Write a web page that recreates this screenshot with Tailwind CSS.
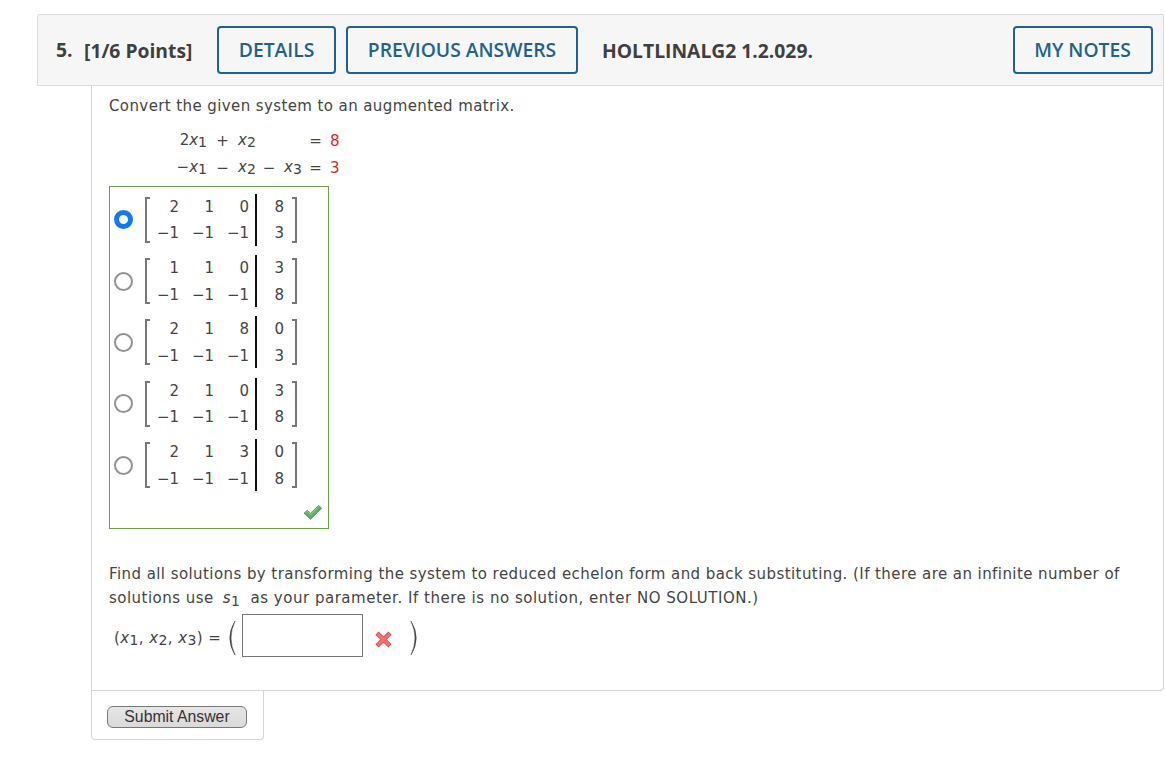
<!DOCTYPE html>
<html lang="en">
<head>
    <meta charset="UTF-8">
    <meta name="viewport" content="width=device-width, initial-scale=1.0">
    <title>HOLTLINALG2 1.2.029</title>
    <script src="https://cdn.jsdelivr.net/npm/@tailwindcss/browser@4"></script>
</head>
<body class="bg-white text-[#444] font-['DejaVu_Sans',sans-serif] text-[15px] h-[766px] overflow-hidden">

    <!-- Question header -->
    <header class="mt-[14px] ml-[37px] w-[1127px] h-[72px] bg-[#f6f6f6] border border-[#dcdcdc] rounded-t-xs flex items-center pl-[18px] pr-[10.5px] font-['Open_Sans',sans-serif] text-[19.3px] font-bold text-[#3f3f3f] whitespace-nowrap">
        <span class="w-[28px]">5.</span>
        <span class="w-[133px] pt-[2px]">[1/6 Points]</span>
        <button class="w-[119px] h-[48px] border-2 border-[#1f628c] rounded-[4px] text-[#1f628c] font-semibold">DETAILS</button>
        <button class="w-[232px] h-[48px] ml-[10px] border-2 border-[#1f628c] rounded-[4px] text-[#1f628c] font-semibold">PREVIOUS ANSWERS</button>
        <span class="ml-[24px] pt-[2px]">HOLTLINALG2 1.2.029.</span>
        <button class="w-[140px] h-[48px] ml-auto border-2 border-[#1f628c] rounded-[4px] text-[#1f628c] font-semibold">MY NOTES</button>
    </header>

    <!-- Question body -->
    <main class="ml-[91px] w-[1073px] h-[605px] border-l border-r border-b border-[#d4d4d4] rounded-br-[4px] pl-[17px] pt-[8px]">
        <p class="h-6 leading-6 tracking-[0.4px]">Convert the given system to an augmented matrix.</p>

        <!-- Linear system -->
        <div class="mt-[9px] ml-[60px] grid grid-cols-[38px_31px_16px_30px_16px_31px_20px] grid-rows-[27px_27px] leading-[27px] whitespace-nowrap">
            <span class="text-right"><span>2</span><i>x</i><span class="relative top-[2px] text-[14px]">1</span></span>
            <span class="text-center pt-px">+</span>
            <span class="text-right pr-px"><i>x</i><span class="relative top-[2px] text-[14px]">2</span></span>
            <span></span>
            <span></span>
            <span class="text-center pt-px">=</span>
            <span class="-ml-px pt-px text-[#d5262b]">8</span>
            <span class="text-right"><span>−</span><i>x</i><span class="relative top-[2px] text-[14px]">1</span></span>
            <span class="text-center pt-px">−</span>
            <span class="text-right pr-px"><i>x</i><span class="relative top-[2px] text-[14px]">2</span></span>
            <span class="text-center pt-px">−</span>
            <span class="text-right pr-px"><i>x</i><span class="relative top-[2px] text-[14px]">3</span></span>
            <span class="text-center pt-px">=</span>
            <span class="-ml-px pt-px text-[#d5262b]">3</span>
        </div>

        <!-- Choices -->
        <div class="mt-[5px] w-[220px] h-[343px] border border-[#6a9f4b] pl-[4px] pt-[2px] relative">
            <div id="choices"></div>
            <svg class="absolute left-[193px] top-[317px] w-[20px] h-[17px]" viewBox="0 0 20 17">
                <path d="M1 9.2 4.2 6.3 7.5 9.4 15.6 1.4 18.7 4.2 7.6 15.3Z" fill="#5bb264" stroke="#58845a" stroke-width=".8" stroke-linejoin="round"/>
                <path d="M2.2 9 4.2 7.3 7.5 10.6 15.6 2.6" fill="none" stroke="#8fd08f" stroke-width="1"/>
            </svg>
        </div>

        <p class="mt-[33px] h-6 leading-6 tracking-[0.428px] whitespace-nowrap">Find all solutions by transforming the system to reduced echelon form and back substituting. (If there are an infinite number of</p>
        <p class="h-6 leading-6 tracking-[0.48px] whitespace-nowrap">solutions use<i class="ml-[9px]">s</i><span class="relative top-[3px] text-[14px]">1</span><span class="ml-[10px] tracking-[0.52px]">as your parameter. If there is no solution, enter NO SOLUTION.)</span></p>

        <!-- Answer entry -->
        <div class="mt-[4px] pl-[5px] flex items-center h-[43px] whitespace-nowrap">
            <span class="w-[114px] pt-[5px] tracking-[0.4px]">(<i>x</i><span class="relative top-[2px] text-[14px]">1</span>, <i>x</i><span class="relative top-[2px] text-[14px]">2</span>, <i>x</i><span class="relative top-[2px] text-[14px]">3</span>) =</span>
            <svg class="w-[8px] h-[36px] mt-[4px]" viewBox="0 0 8 36"><path d="M7 1Q-3.4 18 7 35Q-1 18 7 1Z" fill="#444" stroke="#444" stroke-width=".6"/></svg>
            <input type="text" class="ml-[6px] w-[121px] h-[43px] border border-[#767676]">
            <svg class="ml-[12px] mt-[8px] w-[17px] h-[17px]" viewBox="0 0 17 17">
                <path d="M2 2.2 15 14.8M15 2.2 2 14.8" stroke="#dc4a4d" stroke-width="4.6"/>
                <path d="M2.6 2.8 14.4 14.2M14.4 2.8 2.6 14.2" stroke="#f4706e" stroke-width="3"/>
            </svg>
            <svg class="ml-[18px] w-[8px] h-[36px] mt-[4px]" viewBox="0 0 8 36"><path d="M1 1Q11.4 18 1 35Q9 18 1 1Z" fill="#444" stroke="#444" stroke-width=".6"/></svg>
        </div>
    </main>

    <!-- Submit tab -->
    <footer class="ml-[91px] w-[173px] h-[49px] border border-t-0 border-[#d4d4d4] rounded-b-[4px] pl-[15px] pt-[15px]">
        <button class="block w-[140px] h-[22px] border border-[#777] rounded-[6px] bg-linear-to-b from-[#e6e6e6] to-[#dadada] font-['Liberation_Sans',sans-serif] text-[15.8px] leading-5 text-[#333]">Submit Answer</button>
    </footer>

    <script>
        const choices = [
            [['2', '1', '0', '8'], ['−1', '−1', '−1', '3']],
            [['1', '1', '0', '3'], ['−1', '−1', '−1', '8']],
            [['2', '1', '8', '0'], ['−1', '−1', '−1', '3']],
            [['2', '1', '0', '3'], ['−1', '−1', '−1', '8']],
            [['2', '1', '3', '0'], ['−1', '−1', '−1', '8']]
        ];

        const row = cells => cells.map((c, i) => `<span class="text-right ${i === 3 ? 'pr-[7px]' : ''}">${c}</span>`).join('');

        document.getElementById('choices').innerHTML = choices.map((m, i) => `
            <div class="flex items-center h-[61.4px]">
                <span class="w-[19px] h-[19px] rounded-full ${i === 0 ? 'border-[5.5px] border-[#1577f2]' : 'border-2 border-[#929292]'}"></span>
                <span class="ml-[12px] w-[5px] h-[46px] border-2 border-r-0 border-[#777]"></span>
                <div class="relative pt-[1px] grid grid-cols-[29px_35px_35px_42px] grid-rows-[26.6px_26.6px] leading-[26.6px]">
                    ${row(m[0])}${row(m[1])}
                    <span class="absolute left-[105px] top-[1px] w-[2px] h-[52px] bg-[#111]"></span>
                </div>
                <span class="ml-px w-[5px] h-[46px] border-2 border-l-0 border-[#777]"></span>
            </div>`).join('');
    </script>
</body>
</html>
